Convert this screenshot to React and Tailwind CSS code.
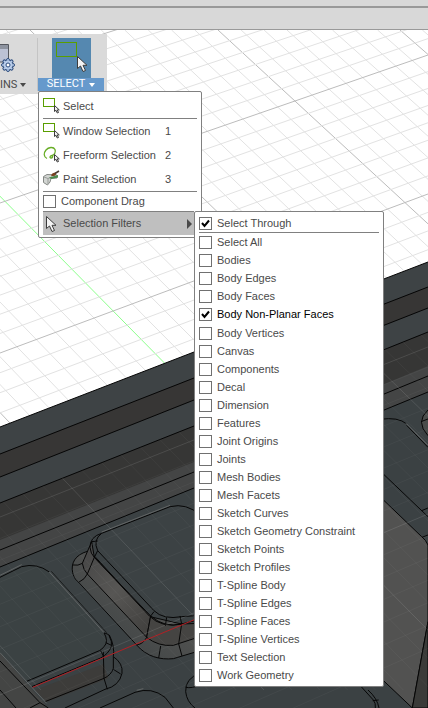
import React, { useState } from "react";

const FILTERS = [
  "Select All",
  "Bodies",
  "Body Edges",
  "Body Faces",
  "Body Non-Planar Faces",
  "Body Vertices",
  "Canvas",
  "Components",
  "Decal",
  "Dimension",
  "Features",
  "Joint Origins",
  "Joints",
  "Mesh Bodies",
  "Mesh Facets",
  "Sketch Curves",
  "Sketch Geometry Constraint",
  "Sketch Points",
  "Sketch Profiles",
  "T-Spline Body",
  "T-Spline Edges",
  "T-Spline Faces",
  "T-Spline Vertices",
  "Text Selection",
  "Work Geometry",
];

// ground grid in perspective, a major line every 8 cells
const gridLines = [];
for (let i = -36; i <= 24; i++) {
  const k = i / 8;
  gridLines.push({
    key: `d${i}`,
    major: i % 8 === 0,
    axis: i === -8,
    x1: 30 + 191 * k - 3 * k * k,
    y1: 30,
    x2: 710 + 223 * k,
    y2: 690,
  });
}
for (let i = -18; i <= 22; i++) {
  const k = i / 8;
  gridLines.push({
    key: `r${i}`,
    major: i % 8 === 0,
    x1: 0,
    y1: 353 + 157 * k + 7 * k * k,
    x2: 428,
    y2: 194 + 146 * k + 7 * k * k,
  });
}

const Grid = ({ dark }) =>
  gridLines.map((l) => (
    <line
      key={l.key}
      x1={l.x1}
      y1={l.y1}
      x2={l.x2}
      y2={l.y2}
      stroke={dark ? "#ffffff" : l.axis ? "#8cff8c" : l.major ? "#bcbcbc" : "#e2e2e2"}
      strokeOpacity={dark ? (l.major ? 0.11 : 0.04) : 1}
    />
  ));

const Viewport = () => (
  <svg
    className="absolute inset-0 h-full w-full"
    viewBox="0 0 428 708"
    preserveAspectRatio="xMidYMid slice"
    aria-hidden="true"
  >
    <defs>
      <clipPath id="body">
        <path d="M0 503 L194 426 L428 332 V708 H0z" />
      </clipPath>
      <linearGradient id="wall" x1="0" y1="0" x2="1" y2="1">
        <stop offset="0" stopColor="#454545" />
        <stop offset="0.5" stopColor="#575654" />
        <stop offset="1" stopColor="#3f3e3c" />
      </linearGradient>
      <linearGradient id="fillet" x1="1" y1="0" x2="0" y2="1">
        <stop offset="0.3" stopColor="#545452" />
        <stop offset="1" stopColor="#3a4042" />
      </linearGradient>
    </defs>
    <Grid />
    <path d="M0 427 L194 352 L428 262 V708 H0z" fill="#3e4345" />
    <path d="M0 454 L194 378 L428 287 V308 L194 400 L0 477z" fill="#373635" />
    <path d="M0 503 L194 426 L428 332 V376 L194 472 L0 550z" fill="#363635" />
    <path d="M0 540 L194 462 L428 366 V392 L194 488 L0 567z" fill="#444545" />
    <path d="M0 567 L194 488 L428 392 V708 H0z" fill="#3b4143" />
    <g fill="none" stroke="#050505">
      <path d="M0 427 L194 352 L428 262" />
      <path d="M0 454 L194 378 L428 287" />
      <path d="M0 477 L194 400 L428 308" />
      <path d="M0 503 L194 426 L428 332" />
      <path d="M0 550 L194 472 L428 376" />
      <path d="M0 567 L194 488 L428 392" />
    </g>

    {/* key pockets on the left */}
    <g
      transform="translate(0 460) scale(0.33333)"
      fill="none"
      stroke="#060606"
      strokeWidth="3"
      strokeLinejoin="round"
    >
      <path
        d="M262 274 C225 285 212 310 218 338 C222 355 230 362 236 367 L410 555 C440 590 480 600 520 596 L600 572 V505 L450 470 L285 290z"
        fill="url(#fillet)"
      />
      <path d="M275 245 L247 310 Q250 330 262 342 L440 532 L452 468 L283 292z" fill="url(#wall)" />
      <path d="M452 468 L440 532 Q475 560 520 556 L600 530 V490 L545 492 Q495 505 452 468z" fill="#454442" />
      <path
        d="M305 220 L510 140 Q560 128 600 165 V466 L545 470 Q490 480 462 452 L293 272 Q278 240 305 220z"
        fill="#3c4244"
      />
      <path d="M305 220 Q270 230 270 262 Q272 282 283 292 L448 468 Q485 505 545 492 L600 478" />
      <path d="M218 315 Q235 318 247 310 M236 367 Q255 358 262 342 L283 292 L293 272 M275 245 L293 243 M452 468 L462 455 M500 472 L496 498 M540 468 L545 492 L536 552 L546 588 M440 532 Q430 552 410 555 M482 558 L476 594" />

      <path d="M105 690 L310 612 L325 655 L140 726z" fill="#3d3c3a" stroke="none" />
      <path d="M328 525 Q345 560 340 590 Q370 610 366 640 Q358 678 315 688 L195 744 M340 590 L340 625 Q334 645 312 655 L135 725 M310 575 L312 655 L322 688 M340 628 L362 642" />
      <path d="M0 352 L65 320 Q110 308 148 336 L312 518 Q325 545 312 558 Q306 568 298 572 L80 664 L0 580z" fill="#3b4243" stroke="none" />
      <path d="M0 352 L65 320 Q110 308 148 336 M312 518 Q327 545 312 560 Q306 568 298 572 L80 664 M312 518 L326 524 Q338 545 334 560 Q325 582 302 594 L95 680 M302 572 L312 592 M318 548 L334 556" />
      <path d="M148 336 L312 518" stroke="#626565" />
      <path d="M154 334 L320 518" stroke="#1a1c1c" />
      <path d="M0 580 L145 744 H0z" fill="#444544" stroke="none" />
      <path d="M0 603 L120 728 M0 690 L48 744 M120 728 L90 744 M120 728 L145 744" />
      <path d="M0 578 L140 730" stroke="#626565" />
      <path d="M300 744 L405 697 Q455 680 495 712 L520 744 M600 640 Q555 655 557 695 Q560 725 585 744 M557 682 Q575 686 600 675" />
      <path d="M305 216 L510 136 M0 346 L65 314 M410 691 L430 686" stroke="#626565" />
      <path d="M98 682 L600 472" stroke="#b31f24" />
    </g>

    {/* wall and pockets on the right */}
    <g
      transform="translate(340 240) scale(0.33333)"
      fill="none"
      stroke="#060606"
      strokeWidth="3"
    >
      <path d="M120 770 L245 890 Q258 900 264 915 V1145 L217 1404 L120 1312z" fill="#525251" />
      <path d="M264 1145 L217 1404 H264z" fill="#3b3b39" />
      <path d="M120 538 Q175 530 200 552" />
      <path d="M198 550 L264 616" stroke="#6a6c6c" />
      <path d="M200 556 L264 622 M130 702 L264 830 M245 812 L264 804 M246 892 L264 885" />
      <path d="M264 510 Q225 545 264 587" fill="#4a4c4b" />
      <path d="M243 545 L264 537" />
      <path d="M60 1336 L100 1380 Q108 1390 106 1404 M84 1350 Q112 1375 117 1404 M98 1382 L116 1380" />
    </g>
    <g clipPath="url(#body)">
      <Grid dark />
    </g>
  </svg>
);

const Pointer = ({ x, y, scale = 1 }) => (
  <path
    transform={`translate(${x} ${y}) scale(${scale})`}
    d="M0 0 V12 L3 9.5 L5.5 15 L8 14 L5.5 8.8 H9.5z"
    fill="#f4f4f4"
    stroke="#3c3c3c"
    strokeWidth={1 / scale}
  />
);

const SelectIcon = () => (
  <svg className="h-[18px] w-[18px]" viewBox="0 0 18 18" aria-hidden="true">
    <rect x="0.5" y="1.5" width="11" height="8" fill="none" stroke="#5a9e00" />
    <Pointer x={11.5} y={8.5} scale={0.5} />
  </svg>
);

const FreeformIcon = () => (
  <svg className="h-[18px] w-[18px]" viewBox="0 0 18 18" aria-hidden="true">
    <path
      d="M4 12.500 C0.500 11 0.500 7 3 4 C5.500 1 10.500 0.500 12 3.500 C13 6 11.500 9 9 9.500 C6.500 10 6.500 12 8 12 C9.500 12 10 10.500 9.500 9.500"
      fill="none"
      stroke="#67ad25"
      strokeWidth="1.3"
    />
    <Pointer x={11.5} y={8.5} scale={0.5} />
  </svg>
);

const PaintIcon = () => (
  <svg className="h-[18px] w-[18px]" viewBox="0 0 18 18" aria-hidden="true">
    <path d="M0.500 6.500 L4 4.500 L14 5 V8 L8 8.500 L7 12 L4.500 15 L0.500 12.500z" fill="#d3d6d3" stroke="#858885" />
    <path d="M1 7 L5 8.500 V14 M5 8.500 L9 7" fill="none" stroke="#999c99" />
    <path d="M6 7.500 L15 5 V7.500 L8 9z" fill="#4b8a4d" />
    <path d="M8 5.500 Q9 2.500 13 2.500 L13 4.500 Q11 7 8 5.500z" fill="#7a3f1d" />
    <path d="M12 3.500 L16 1" stroke="#4b3a31" strokeWidth="1.5" />
  </svg>
);

const CursorIcon = () => (
  <svg className="h-[18px] w-[18px]" viewBox="0 0 18 18" aria-hidden="true">
    <Pointer x={3.5} y={1.5} />
  </svg>
);

const GearPanelIcon = () => (
  <svg className="h-[30px] w-4" viewBox="0 0 16 30" aria-hidden="true">
    <path d="M-4 2.500 H8.500 V20 H-4z" fill="#bcc2d4" stroke="#55585f" />
    <path d="M-4 3 H8 V7 H-4z" fill="#8d939f" />
    <g stroke="#2e4d7d" fill="#b9cdea">
      {[0, 45, 90, 135, 180, 225, 270, 315].map((a) => (
        <circle key={a} cx="8" cy="18" r="1.500" transform={`rotate(${a} 8 23)`} />
      ))}
      <circle cx="8" cy="23" r="4.500" stroke="none" />
      <circle cx="8" cy="23" r="2" fill="#ffffff" />
    </g>
  </svg>
);

const Caret = () => (
  <svg className="h-1 w-[6px]" viewBox="0 0 6 4" aria-hidden="true">
    <path d="M0 0 H6 L3 4z" fill="currentColor" />
  </svg>
);

const CheckItem = ({ label, checked, onChange, className }) => (
  <label className={`flex items-center gap-[5px] ${className}`}>
    <span className="grid">
      <input
        type="checkbox"
        checked={checked}
        onChange={onChange}
        className="peer col-start-1 row-start-1 h-[13px] w-[13px] appearance-none border border-[#707070] bg-white"
      />
      <svg
        className="pointer-events-none invisible col-start-1 row-start-1 h-[13px] w-[13px] peer-checked:visible"
        viewBox="0 0 13 13"
        aria-hidden="true"
      >
        <path d="M3 6 L5.500 9 L10 3.500" fill="none" stroke="#000000" strokeWidth="2" />
      </svg>
    </span>
    {label}
  </label>
);

const MenuButton = ({ icon, label, shortcut }) => (
  <button type="button" className="flex h-6 w-full items-center gap-[2px] text-left">
    {icon}
    <span className="w-[100px] whitespace-nowrap">{label}</span>
    {shortcut && <span>{shortcut}</span>}
  </button>
);

const SelectionFilters = () => {
  const [through, setThrough] = useState(true);
  const [active, setActive] = useState(["Body Non-Planar Faces"]);

  const toggle = (name) =>
    setActive((prev) =>
      prev.includes(name) ? prev.filter((n) => n !== name) : [...prev, name]
    );

  return (
    <div className="absolute left-full top-0 w-[190px] rounded-xs border border-[#808080] bg-white px-1 pt-[2px] pb-[2px]">
      <CheckItem
        label="Select Through"
        checked={through}
        onChange={() => setThrough(!through)}
        className="h-[18px]"
      />
      <hr className="border-[#808080]" />
      {FILTERS.map((name) => (
        <CheckItem
          key={name}
          label={name}
          checked={active.includes(name)}
          onChange={() => toggle(name)}
          className={active.includes(name) ? "h-[19px] text-black" : "h-[18px]"}
        />
      ))}
    </div>
  );
};

const SelectMenu = () => {
  const [drag, setDrag] = useState(false);

  return (
    <div className="absolute left-0 top-full w-[164px] rounded-xs border border-[#808080] bg-white pt-[2px] pb-[2px] pl-1 text-[11px] text-[#4a4a4a]">
      <div className="pr-1">
        <MenuButton icon={<SelectIcon />} label="Select" />
        <hr className="border-[#808080]" />
        <MenuButton icon={<SelectIcon />} label="Window Selection" shortcut="1" />
        <MenuButton icon={<FreeformIcon />} label="Freeform Selection" shortcut="2" />
        <MenuButton icon={<PaintIcon />} label="Paint Selection" shortcut="3" />
        <hr className="border-[#808080]" />
        <CheckItem
          label="Component Drag"
          checked={drag}
          onChange={() => setDrag(!drag)}
          className="h-[19px]"
        />
      </div>
      <div className="relative mr-[7px]">
        <button
          type="button"
          className="flex h-6 w-full items-center gap-[2px] border-t border-[#808080] bg-[#bfbfbf] pr-[2px] text-left"
        >
          <CursorIcon />
          <span className="grow">Selection Filters</span>
          <svg className="h-[10px] w-[5px]" viewBox="0 0 5 10" aria-hidden="true">
            <path d="M0 0 L5 5 L0 10z" fill="#4a4a4a" />
          </svg>
        </button>
        <SelectionFilters />
      </div>
    </div>
  );
};

const Toolbar = () => (
  <div className="relative flex h-[60px] w-[107px] bg-[#dadada] pt-1 font-[Roboto,sans-serif] text-[11px]">
    <button
      type="button"
      aria-label="Add-ins"
      className="flex w-[37px] flex-col justify-between pt-1 pb-[3px] text-[#4a4a4a]"
    >
      <GearPanelIcon />
      <span className="flex items-center gap-[3px] leading-[13px]">
        INS
        <Caret />
      </span>
    </button>
    <div className="relative h-[53px] w-[67px] border-l border-[#c4c4c4]">
      <button type="button" className="flex w-full flex-col items-center text-white">
        <span className="flex h-10 w-[39px] bg-[#5588b0]">
          <svg className="h-10 w-[39px]" viewBox="0 0 39 40" aria-hidden="true">
            <rect x="4.500" y="4.500" width="20" height="14" fill="none" stroke="#5a9e00" />
            <Pointer x={25.5} y={18.5} />
          </svg>
        </span>
        <span className="flex h-[13px] w-full items-center justify-center gap-1 bg-[#6699cc]">
          SELECT
          <Caret />
        </span>
      </button>
      <div className="font-['Liberation_Sans',Arial,sans-serif]">
        <SelectMenu />
      </div>
    </div>
  </div>
);

const App = () => (
  <div className="flex min-h-screen flex-col overflow-hidden bg-white">
    <header className="h-[30px] border-b border-[#999999] bg-[#d8d8d8] pt-[6px]">
      <div className="h-[2px] bg-[#999999]" />
    </header>
    <main className="relative grow pt-1">
      <div className="absolute inset-x-0 -top-[30px] bottom-0 [clip-path:inset(30px_0_0_0)]">
        <Viewport />
      </div>
      <Toolbar />
    </main>
  </div>
);

export default App;
